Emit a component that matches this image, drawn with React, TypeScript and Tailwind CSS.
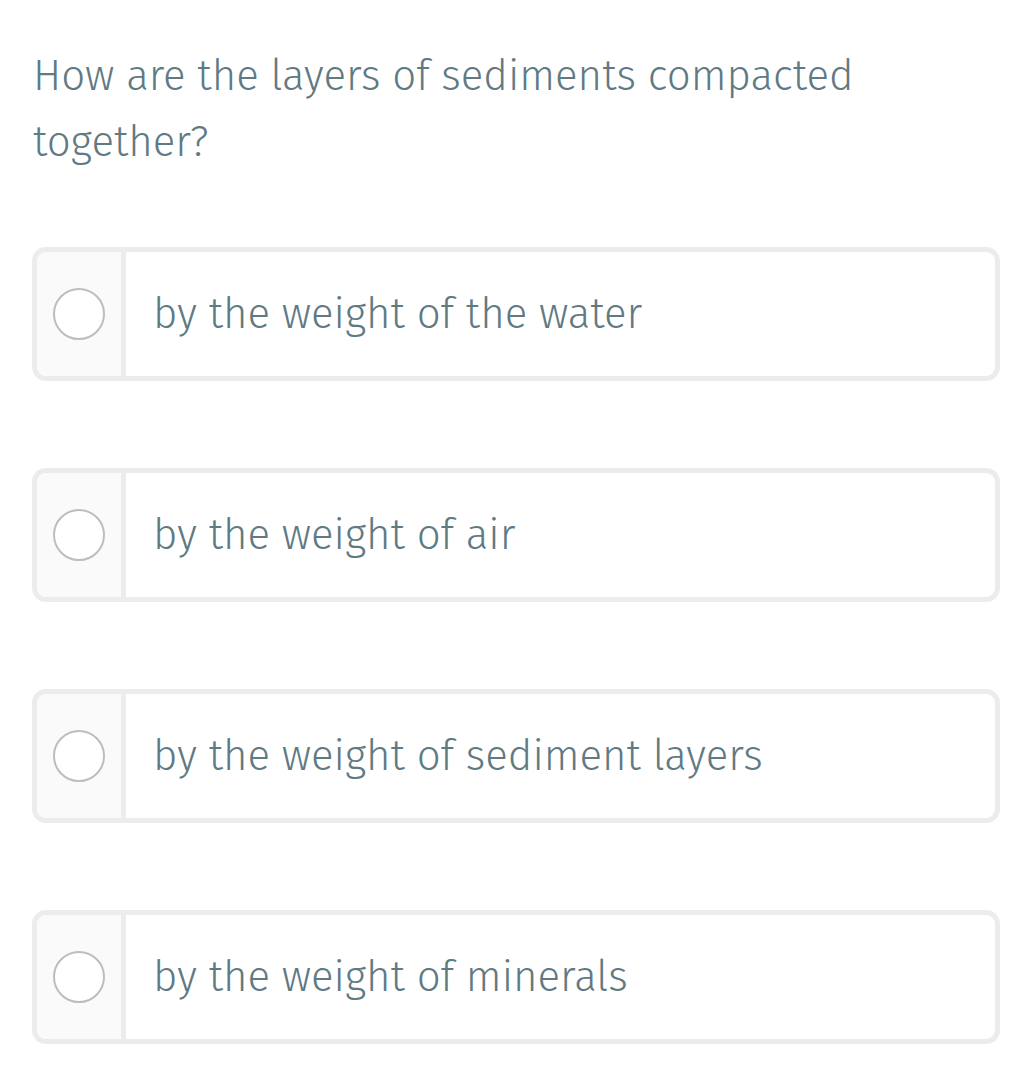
import React from 'react'

const options = [
  'by the weight of the water',
  'by the weight of air',
  'by the weight of sediment layers',
  'by the weight of minerals',
]

function Radio() {
  return <div className="w-[52px] h-[52px] rounded-full border-2 border-[#bdbdbd] bg-white" />
}

function Option({ label }: { label: string }) {
  return (
    <div className="flex h-[134px] rounded-[14px] border-[5px] border-[#ececec] overflow-hidden bg-white">
      <div className="w-[89px] shrink-0 flex items-center justify-center bg-[#fafafa] border-r-[5px] border-[#ececec]">
        <Radio />
      </div>
      <div className="flex items-center pl-[27px] text-[42px] font-light text-[#5f7a83]">{label}</div>
    </div>
  )
}

export default function App() {
  return (
    <div className="min-h-screen bg-white px-[32px] pt-[43px]" style={{ fontFamily: '"Fira Sans", Lato, "Noto Sans", sans-serif' }}>
      <h1 className="text-[42px] leading-[66px] font-light text-[#5f7a83] pl-[1px]">
        How are the layers of sediments compacted together?
      </h1>
      <div className="mt-[72px] flex flex-col gap-[87px] w-[968px]">
        {options.map((o) => (
          <Option key={o} label={o} />
        ))}
      </div>
    </div>
  )
}
